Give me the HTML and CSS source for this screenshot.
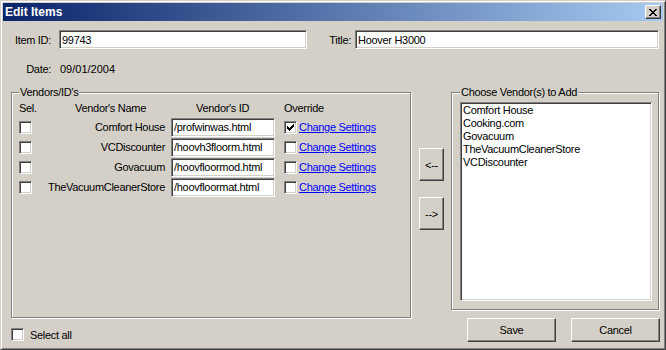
FILE: index.html
```html
<!DOCTYPE html>
<html lang="en">
<head>
  <meta charset="UTF-8" />
  <meta name="viewport" content="width=device-width, initial-scale=1.0"/>
  <title>Edit Items</title>
  <link rel="stylesheet" href="styles.css">
</head>
<body>
  <div class="window">
    <div class="titlebar">
      <span class="title">Edit Items</span>
      <button class="btn close-btn" title="Close">
        <svg width="8" height="7" viewBox="0 0 8 7" shape-rendering="crispEdges">
          <path d="M0 0h2v1H0zM6 0h2v1H6zM1 1h2v1H1zM5 1h2v1H5zM2 2h4v1H2zM3 3h2v1H3zM2 4h4v1H2zM1 5h2v1H1zM5 5h2v1H5zM0 6h2v1H0zM6 6h2v1H6z" fill="#000"/>
        </svg>
      </button>
    </div>

    <div class="content">
      <div class="field-row">
        <label class="lbl">Item ID:</label>
        <input class="text item-id" type="text" value="99743">
        <label class="lbl title-lbl">Title:</label>
        <input class="text item-title" type="text" value="Hoover H3000">
      </div>

      <div class="date-row">
        <span class="lbl">Date:</span>
        <span class="date-value">09/01/2004</span>
      </div>

      <div class="main">
        <div class="left-col">
          <fieldset class="group vendors">
            <legend>Vendors/ID's</legend>
            <div class="vendor-grid">
              <div class="hd">Sel.</div>
              <div class="hd hd-name">Vendor's Name</div>
              <div class="hd hd-id">Vendor's ID</div>
              <div class="hd">Override</div>

              <div><span class="check"></span></div>
              <div class="name">Comfort House</div>
              <div><input class="text vid" type="text" value="/profwinwas.html"></div>
              <div class="override">
                <span class="check">
                  <svg width="7" height="7" viewBox="0 0 7 7" shape-rendering="crispEdges"><path d="M6 0h1v1H6zM5 1h2v1H5zM0 2h1v1H0zM4 2h3v1H4zM0 3h2v1H0zM3 3h3v1H3zM0 4h5v1H0zM1 5h3v1H1zM2 6h1v1H2z" fill="#000"/></svg>
                </span>
                <a href="#" class="settings-link">Change Settings</a>
              </div>

              <div><span class="check"></span></div>
              <div class="name">VCDiscounter</div>
              <div><input class="text vid" type="text" value="/hoovh3floorm.html"></div>
              <div class="override"><span class="check"></span><a href="#" class="settings-link">Change Settings</a></div>

              <div><span class="check"></span></div>
              <div class="name">Govacuum</div>
              <div><input class="text vid" type="text" value="/hoovfloormod.html"></div>
              <div class="override"><span class="check"></span><a href="#" class="settings-link">Change Settings</a></div>

              <div><span class="check"></span></div>
              <div class="name">TheVacuumCleanerStore</div>
              <div><input class="text vid" type="text" value="/hoovfloormat.html"></div>
              <div class="override"><span class="check"></span><a href="#" class="settings-link">Change Settings</a></div>
            </div>
          </fieldset>

          <div class="select-all">
            <span class="check"></span>
            <span>Select all</span>
          </div>
        </div>

        <div class="arrows">
          <button class="btn arrow-btn">&lt;--</button>
          <button class="btn arrow-btn">--&gt;</button>
        </div>

        <div class="right-col">
          <fieldset class="group choose">
            <legend>Choose Vendor(s) to Add</legend>
            <div class="listbox">
              <div>Comfort House</div>
              <div>Cooking.com</div>
              <div>Govacuum</div>
              <div>TheVacuumCleanerStore</div>
              <div>VCDiscounter</div>
            </div>
          </fieldset>

          <div class="actions">
            <button class="btn action-btn">Save</button>
            <button class="btn action-btn">Cancel</button>
          </div>
        </div>
      </div>
    </div>
  </div>
</body>
</html>
```

FILE: styles.css
```css
* {
  box-sizing: border-box;
}

body {
  margin: 0;
  background: #d4d0c8;
  font-family: "Liberation Sans", Arial, sans-serif;
  font-size: 11px;
  letter-spacing: -0.3px;
  color: #000;
}

.window {
  width: 666px;
  height: 350px;
  padding: 2px;
  border: 1px solid;
  border-color: #d4d0c8 #404040 #404040 #d4d0c8;
  box-shadow: inset 1px 1px 0 #fff, inset -1px -1px 0 #808080;
  overflow: hidden;
}

.titlebar {
  height: 18px;
  display: flex;
  align-items: center;
  justify-content: space-between;
  padding: 0 2px;
  background: linear-gradient(to right, #0a246a, #a6caf0);
}

.title {
  color: #fff;
  font-weight: bold;
  font-size: 12px;
  letter-spacing: 0;
}

/* raised win2000 button */
.btn {
  background: #d4d0c8;
  border: 1px solid;
  border-color: #fff #404040 #404040 #fff;
  box-shadow: inset -1px -1px 0 #808080;
  font: inherit;
  letter-spacing: inherit;
  color: #000;
  padding: 0;
  cursor: pointer;
}

.close-btn {
  width: 16px;
  height: 14px;
  display: flex;
  align-items: center;
  justify-content: center;
}

/* sunken field */
.text, .check, .listbox {
  background: #fff;
  border: 1px solid;
  border-color: #808080 #fff #fff #808080;
  box-shadow: inset 1px 1px 0 #404040, inset -1px -1px 0 #d4d0c8;
}

.text {
  height: 19px;
  padding: 0 2px;
  font: inherit;
  letter-spacing: inherit;
  color: #000;
  outline: none;
}

.content {
  padding: 9px 3px 0 8px;
}

.field-row {
  display: flex;
  align-items: center;
  height: 19px;
}

.lbl {
  width: 40px;
  flex: none;
  text-align: right;
}

.item-id {
  width: 248px;
  margin-left: 8px;
}

.title-lbl {
  margin-left: 4px;
}

.item-title {
  width: 304px;
  margin-left: 4px;
}

.date-row {
  display: flex;
  align-items: center;
  height: 14px;
  margin-top: 13px;
}

.date-value {
  margin-left: 9px;
  letter-spacing: 0;
}

.main {
  display: flex;
  margin-top: 10px;
}

.group {
  margin: 0;
  padding: 0;
  min-width: 0;
  border: 1px solid #808080;
  box-shadow: inset 1px 1px 0 #fff, 1px 1px 0 #fff;
}

.group legend {
  padding: 0 1px;
  line-height: 13px;
  background: #d4d0c8;
}

.left-col {
  width: 400px;
  flex: none;
}

.vendors {
  height: 232px;
}

.vendors legend {
  margin-left: 7px;
}

.vendor-grid {
  display: grid;
  grid-template-columns: 26px 126px 113px auto;
  grid-template-rows: 18px repeat(4, 20px);
  align-items: center;
  white-space: nowrap;
  margin-left: 7px;
}

.hd-name {
  padding-left: 30px;
}

.hd-id {
  padding-left: 25px;
}

.name {
  display: flex;
  justify-content: flex-end;
  padding-right: 6px;
}

.vid {
  width: 104px;
  display: block;
}

.check {
  width: 13px;
  height: 13px;
  display: flex;
  align-items: center;
  justify-content: center;
  flex: none;
}

.override {
  display: flex;
  align-items: center;
  gap: 2px;
}

.settings-link {
  color: #0000ff;
  text-decoration: underline;
}

.select-all {
  display: flex;
  align-items: center;
  gap: 6px;
  height: 13px;
  margin-top: 10px;
}

.arrows {
  width: 25px;
  flex: none;
  display: flex;
  flex-direction: column;
  gap: 16px;
  margin: 62px 7px 0 8px;
}

.arrow-btn {
  height: 33px;
}

.right-col {
  width: 209px;
  flex: none;
}

.choose {
  width: 208px;
  height: 224px;
}

.choose legend {
  margin-left: 8px;
}

.listbox {
  width: 192px;
  height: 199px;
  margin: 3px 0 0 8px;
  padding: 1px 2px;
  line-height: 13px;
}

.actions {
  display: flex;
  justify-content: flex-end;
  gap: 15px;
  margin-top: 8px;
}

.action-btn {
  width: 89px;
  height: 24px;
}
```
